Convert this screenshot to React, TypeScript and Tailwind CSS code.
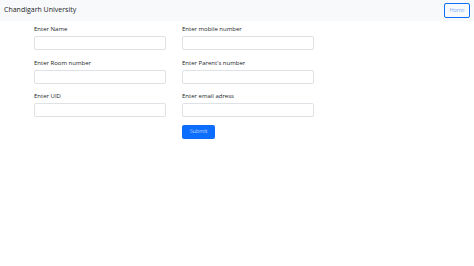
export default function App() {
  const left = ["Enter Name", "Enter Room number", "Enter UID"]
  const right = ["Enter mobile number", "Enter Parent's number", "Enter email adress"]
  return (
    <div className="min-h-[266px] bg-white font-['Open_Sans',sans-serif] text-[#212529]">
      <nav className="flex h-[21px] items-center justify-between bg-[#f8f9fa] pl-[4px] pr-[4px]">
        <span className="text-[7px]">Chandigarh University</span>
        <button className="flex h-[15px] w-[26px] items-center justify-center rounded-[2px] border border-[#0d6efd] text-[5.5px] font-light text-[#0d6efd]">
          Home
        </button>
      </nav>
      <div className="ml-[34px] mt-[5px] flex gap-[16px]">
        <div className="flex w-[132px] flex-col gap-[9.5px]">
          {left.map((l) => (
            <div key={l} className="flex flex-col">
              <label className="mb-[3px] h-[7px] text-[6px] leading-[7px]">{l}</label>
              <input className="h-[14px] w-full rounded-[2px] border border-[#dee2e6] bg-white" />
            </div>
          ))}
        </div>
        <div className="flex w-[132px] flex-col gap-[9.5px]">
          {right.map((l) => (
            <div key={l} className="flex flex-col">
              <label className="mb-[3px] h-[7px] text-[6px] leading-[7px]">{l}</label>
              <input className="h-[14px] w-full rounded-[2px] border border-[#dee2e6] bg-white" />
            </div>
          ))}
          <button className="mt-[-2px] h-[14px] w-[33px] rounded-[2px] bg-[#0d6efd] text-[5.5px] font-light text-white">
            Submit
          </button>
        </div>
      </div>
    </div>
  )
}
